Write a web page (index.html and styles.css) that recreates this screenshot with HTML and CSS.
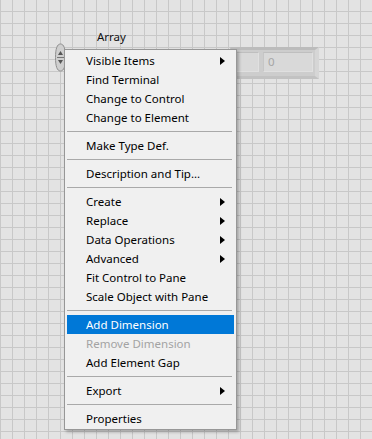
FILE: index.html
```html
<!DOCTYPE html>
<html>
<head>
<meta charset="utf-8">
<link rel="stylesheet" href="styles.css">
</head>
<body>
<div class="panel">
  <div class="array-label">Array</div>
  <div class="index-stepper">
    <svg width="11" height="29" viewBox="0 0 11 29">
      <path d="M5.5 1 C9 1 10.5 6 10.5 14.5 C10.5 23 9 28 5.5 28 C2 28 0.5 23 0.5 14.5 C0.5 6 2 1 5.5 1 Z" fill="#cfcfcf" stroke="#8f8f8f"/>
      <path d="M5.5 8 L8 12 L3 12 Z" fill="#555"/>
      <path d="M5.5 21 L8 17 L3 17 Z" fill="#555"/>
      <line x1="2" y1="14.5" x2="9" y2="14.5" stroke="#777"/>
    </svg>
  </div>
  <div class="array-frame">
    <div class="elem elem-a"></div>
    <div class="elem elem-b">0</div>
  </div>

  <div class="menu">
    <div class="item sub"><span>Visible Items</span><i class="arrow"></i></div>
    <div class="item"><span>Find Terminal</span></div>
    <div class="item"><span>Change to Control</span></div>
    <div class="item"><span>Change to Element</span></div>
    <div class="sep"></div>
    <div class="item"><span>Make Type Def.</span></div>
    <div class="sep"></div>
    <div class="item"><span>Description and Tip...</span></div>
    <div class="sep"></div>
    <div class="item sub"><span>Create</span><i class="arrow"></i></div>
    <div class="item sub"><span>Replace</span><i class="arrow"></i></div>
    <div class="item sub"><span>Data Operations</span><i class="arrow"></i></div>
    <div class="item sub"><span>Advanced</span><i class="arrow"></i></div>
    <div class="item"><span>Fit Control to Pane</span></div>
    <div class="item"><span>Scale Object with Pane</span></div>
    <div class="sep"></div>
    <div class="item active"><span>Add Dimension</span></div>
    <div class="item disabled"><span>Remove Dimension</span></div>
    <div class="item"><span>Add Element Gap</span></div>
    <div class="sep"></div>
    <div class="item sub"><span>Export</span><i class="arrow"></i></div>
    <div class="sep"></div>
    <div class="item"><span>Properties</span></div>
  </div>
</div>
</body>
</html>
```

FILE: styles.css
```css
html, body {
  margin: 0;
  padding: 0;
}
body {
  width: 372px;
  height: 439px;
  overflow: hidden;
  font-family: "Noto Sans", "Open Sans", sans-serif;
  font-size: 11.5px;
  color: #000;
  background-color: #e3e3e3;
  background-image:
    linear-gradient(to right, #c8c8c8 1px, transparent 1px),
    linear-gradient(to bottom, #c8c8c8 1px, transparent 1px);
  background-size: 12px 12px;
  background-position: 0 11px;
}
.panel {
  position: relative;
  width: 372px;
  height: 439px;
}
.array-label {
  position: absolute;
  left: 97px;
  top: 28px;
  line-height: 18px;
  color: #111;
}
.index-stepper {
  position: absolute;
  left: 55px;
  top: 43px;
  width: 11px;
  height: 29px;
}
.index-stepper svg {
  display: block;
}
.array-frame {
  position: absolute;
  left: 230px;
  top: 47px;
  width: 89px;
  height: 32px;
  box-sizing: border-box;
  background: #cdcdcd;
  border-top: 3px solid #bcbcbc;
  border-left: 2px solid #c4c4c4;
  border-right: 4px solid #d6d6d6;
  border-bottom: 3px solid #c2c2c2;
  display: flex;
  gap: 4px;
  padding: 2px 0 0 4px;
}
.elem {
  height: 20px;
  box-sizing: border-box;
  background: #d9d9d9;
  border: 1px solid #c6c6c6;
  border-top-color: #bfbfbf;
  border-right-color: #e0e0e0;
  border-bottom-color: #e0e0e0;
}
.elem-a {
  width: 23px;
}
.elem-b {
  width: 50px;
  color: #a6a6a6;
  line-height: 18px;
  padding-left: 4px;
}
.menu {
  position: absolute;
  left: 64px;
  top: 49px;
  width: 173px;
  box-sizing: border-box;
  background: #f0f0f0;
  border: 1px solid #979797;
  padding: 1px 2px;
  box-shadow: 2px 2px 3px rgba(0, 0, 0, 0.28);
}
.item {
  height: 19px;
  line-height: 19px;
  padding-left: 19px;
  padding-right: 9px;
  display: flex;
  justify-content: space-between;
  align-items: center;
  white-space: nowrap;
}
.item.active {
  background: #0078d7;
  color: #fff;
}
.item.disabled {
  color: #a3a3a3;
}
.arrow {
  width: 0;
  height: 0;
  border-top: 4px solid transparent;
  border-bottom: 4px solid transparent;
  border-left: 5px solid #000;
}
.sep {
  height: 1px;
  margin: 4px 2px 4px 0;
  background: #a9a9a9;
}
```
